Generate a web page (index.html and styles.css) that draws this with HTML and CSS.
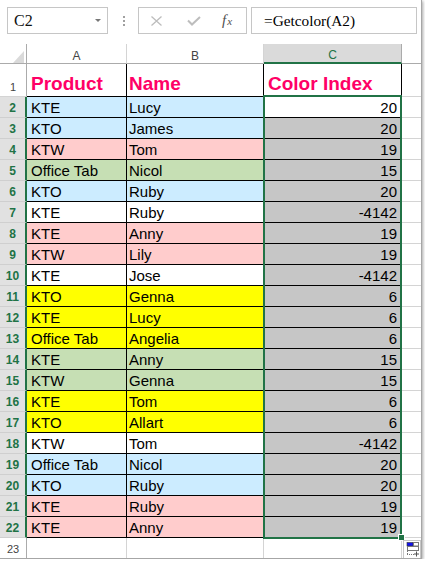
FILE: index.html
```html
<!DOCTYPE html>
<html>
<head>
<meta charset="utf-8">
<link rel="stylesheet" href="styles.css">
</head>
<body>
<div class="app">
  <div class="bar">
    <div class="namebox"><span class="ref">C2</span><span class="caret"></span></div>
    <div class="grip"><i></i><i></i><i></i></div>
    <div class="btns">
      <svg class="x-ic" width="11" height="10" viewBox="0 0 11 10"><path d="M0.5 0.5 L10.5 9.5 M10.5 0.5 L0.5 9.5" stroke="#BDBDBD" stroke-width="1.3" fill="none"/></svg>
      <svg class="ok-ic" width="14" height="10" viewBox="0 0 14 10"><path d="M1 4.5 L5 8.5 L13 1" stroke="#BDBDBD" stroke-width="2" fill="none"/></svg>
      <span class="fx"><i>f</i><span class="fxx">x</span></span>
    </div>
    <div class="formula">=Getcolor(A2)</div>
  </div>
  <div class="sheet">
    <div class="corner"><span class="tri"></span></div>
    <div class="ch">A</div>
    <div class="ch">B</div>
    <div class="ch cs">C</div>
    <div class="ch dh"></div>

    <div class="rh">1</div>
    <div class="c a h">Product</div>
    <div class="c b h">Name</div>
    <div class="c a h">Color Index</div>
    <div class="d"></div>

    <div class="rh s">2</div><div class="c a bl">KTE</div><div class="c b bl">Lucy</div><div class="c n">20</div><div class="d"></div>
    <div class="rh s">3</div><div class="c a bl">KTO</div><div class="c b bl">James</div><div class="c n g">20</div><div class="d"></div>
    <div class="rh s">4</div><div class="c a pk">KTW</div><div class="c b pk">Tom</div><div class="c n g">19</div><div class="d"></div>
    <div class="rh s">5</div><div class="c a gr">Office Tab</div><div class="c b gr">Nicol</div><div class="c n g">15</div><div class="d"></div>
    <div class="rh s">6</div><div class="c a bl">KTO</div><div class="c b bl">Ruby</div><div class="c n g">20</div><div class="d"></div>
    <div class="rh s">7</div><div class="c a">KTE</div><div class="c b">Ruby</div><div class="c n g">-4142</div><div class="d"></div>
    <div class="rh s">8</div><div class="c a pk">KTE</div><div class="c b pk">Anny</div><div class="c n g">19</div><div class="d"></div>
    <div class="rh s">9</div><div class="c a pk">KTW</div><div class="c b pk">Lily</div><div class="c n g">19</div><div class="d"></div>
    <div class="rh s">10</div><div class="c a">KTE</div><div class="c b">Jose</div><div class="c n g">-4142</div><div class="d"></div>
    <div class="rh s">11</div><div class="c a ye">KTO</div><div class="c b ye">Genna</div><div class="c n g">6</div><div class="d"></div>
    <div class="rh s">12</div><div class="c a ye">KTE</div><div class="c b ye">Lucy</div><div class="c n g">6</div><div class="d"></div>
    <div class="rh s">13</div><div class="c a ye">Office Tab</div><div class="c b ye">Angelia</div><div class="c n g">6</div><div class="d"></div>
    <div class="rh s">14</div><div class="c a gr">KTE</div><div class="c b gr">Anny</div><div class="c n g">15</div><div class="d"></div>
    <div class="rh s">15</div><div class="c a gr">KTW</div><div class="c b gr">Genna</div><div class="c n g">15</div><div class="d"></div>
    <div class="rh s">16</div><div class="c a ye">KTE</div><div class="c b ye">Tom</div><div class="c n g">6</div><div class="d"></div>
    <div class="rh s">17</div><div class="c a ye">KTO</div><div class="c b ye">Allart</div><div class="c n g">6</div><div class="d"></div>
    <div class="rh s">18</div><div class="c a">KTW</div><div class="c b">Tom</div><div class="c n g">-4142</div><div class="d"></div>
    <div class="rh s">19</div><div class="c a bl">Office Tab</div><div class="c b bl">Nicol</div><div class="c n g">20</div><div class="d"></div>
    <div class="rh s">20</div><div class="c a bl">KTO</div><div class="c b bl">Ruby</div><div class="c n g">20</div><div class="d"></div>
    <div class="rh s">21</div><div class="c a pk">KTE</div><div class="c b pk">Ruby</div><div class="c n g">19</div><div class="d"></div>
    <div class="rh s">22</div><div class="c a pk">KTE</div><div class="c b pk">Anny</div><div class="c n g">19</div><div class="d"></div>

    <div class="rh last">23</div><div class="e"></div><div class="e"></div><div class="e"></div><div class="d last"></div>
  </div>
  <div class="sel"></div>
  <div class="handle"></div>
  <div class="paste">
    <svg width="16" height="17" viewBox="0 0 16 17">
      <rect x="3" y="1.5" width="6" height="3.5" fill="#1010F0" stroke="#333" stroke-width="0.6"/>
      <rect x="9.5" y="1.5" width="5" height="3.5" fill="none" stroke="#777" stroke-width="1"/>
      <rect x="3.5" y="5.5" width="11" height="4" fill="none" stroke="#777" stroke-width="1"/>
      <path d="M3.5 10 V13.5" stroke="#777" stroke-width="1" stroke-dasharray="1 1"/>
      <path d="M3 13.5 H10" stroke="#777" stroke-width="1" stroke-dasharray="1 1"/>
      <path d="M12.5 10.5 V15.5 M10 13 H15" stroke="#555" stroke-width="1"/>
    </svg>
  </div>
</div>
</body>
</html>
```

FILE: styles.css
```css
html, body {
  margin: 0;
  padding: 0;
  background: #fff;
}

.app {
  position: relative;
  width: 422px;
  height: 559px;
  box-sizing: border-box;
  border-right: 1px solid #A6A6A6;
  border-bottom: 1px solid #A6A6A6;
  box-shadow: 1px 1px 3px rgba(0, 0, 0, 0.35);
  background: #fff;
  overflow: hidden;
}

/* ---------- formula bar ---------- */
.bar {
  height: 44px;
  box-sizing: border-box;
  display: flex;
  align-items: flex-start;
  padding: 7px 0 0 7px;
}

.namebox {
  width: 101px;
  height: 27px;
  box-sizing: border-box;
  border: 1px solid #C6C6C6;
  display: flex;
  align-items: center;
  padding: 1px 0 0 6px;
  font-family: "Liberation Serif", serif;
  font-size: 16px;
  color: #111;
}

.ref {
  flex: 1;
}

.caret {
  width: 0;
  height: 0;
  border-left: 3px solid transparent;
  border-right: 3px solid transparent;
  border-top: 3px solid #777;
  margin-right: 6px;
  margin-top: -1px;
}

.grip {
  margin-left: 14px;
  width: 3px;
  height: 27px;
  display: flex;
  flex-direction: column;
  align-items: center;
  justify-content: center;
  gap: 2px;
}

.grip i {
  display: block;
  width: 2px;
  height: 2px;
  background: #A0A0A0;
}

.btns {
  margin-left: 13px;
  width: 109px;
  height: 27px;
  box-sizing: border-box;
  border: 1px solid #C6C6C6;
  display: flex;
  align-items: center;
}

.x-ic {
  margin-left: 12px;
}

.ok-ic {
  margin-left: 25px;
  margin-top: 1px;
}

.fx {
  margin-left: 21px;
  font-family: "Liberation Serif", serif;
  color: #505050;
  font-size: 15px;
  display: flex;
  align-items: baseline;
}

.fx i {
  font-style: italic;
}

.fxx {
  font-style: italic;
  font-size: 11px;
  margin-left: 1px;
}

.formula {
  margin-left: 4px;
  margin-right: 4px;
  flex: 1;
  height: 27px;
  box-sizing: border-box;
  border: 1px solid #C6C6C6;
  display: flex;
  align-items: center;
  padding: 1px 0 0 12px;
  font-family: "Liberation Serif", serif;
  font-size: 15.3px;
  color: #000;
}

/* ---------- grid ---------- */
.sheet {
  display: grid;
  grid-template-columns: 27px 100px 137px 138px 19px;
  grid-template-rows: 20px 33px repeat(21, 21px) 20px;
}

.sheet > div {
  box-sizing: border-box;
}

.corner {
  border-right: 1px solid #ABABAB;
  border-bottom: 1px solid #ABABAB;
  display: flex;
  justify-content: flex-end;
  align-items: flex-end;
  padding: 0 2px 0 0;
}

.tri {
  width: 0;
  height: 0;
  border-left: 11px solid transparent;
  border-bottom: 12px solid #DADADA;
}

.ch {
  border-right: 1px solid #D4D4D4;
  border-bottom: 1px solid #ABABAB;
  display: flex;
  justify-content: center;
  align-items: flex-end;
  font-family: "Liberation Sans", sans-serif;
  font-size: 12px;
  line-height: 14px;
  color: #444;
}

.ch.cs {
  background: #DADADA;
  color: #217346;
  border-bottom: 2px solid #217346;
  border-right: 1px solid #ABABAB;
}

.ch.dh {
  border-right: none;
}

.rh {
  border-right: 1px solid #ABABAB;
  border-bottom: 1px solid #D4D4D4;
  display: flex;
  justify-content: center;
  align-items: flex-end;
  padding-bottom: 2px;
  font-family: "Liberation Sans", sans-serif;
  font-size: 11px;
  line-height: 13px;
  color: #444;
}

.rh.s {
  background: #E1E1E1;
  border-right: 2px solid #217346;
  border-bottom: 1px solid #CFCFCF;
  color: #217346;
  font-weight: bold;
  font-size: 12px;
  line-height: 14px;
}

.rh.last {
  border-bottom: none;
}

.c {
  border-right: 1px solid #000;
  border-bottom: 1px solid #000;
  display: flex;
  align-items: flex-end;
  padding-bottom: 1px;
  font-family: "Liberation Sans", Arial, sans-serif;
  font-size: 15px;
  line-height: 17px;
  color: #000;
  white-space: nowrap;
  overflow: hidden;
}

.c.a {
  padding-left: 4px;
}

.c.b {
  padding-left: 2px;
}

.c.n {
  justify-content: flex-end;
  padding-right: 4px;
}

.c.h {
  font-weight: bold;
  font-size: 19px;
  line-height: 22px;
  color: #FF0066;
}

.bl { background: #CCECFF; }
.pk { background: #FFCCCC; }
.gr { background: #C6DFB4; }
.ye { background: #FFFF00; }
.g  { background: #C6C6C6; }

.d {
  border-bottom: 1px solid #D4D4D4;
}

.d.last,
.e.last {
  border-bottom: none;
}

.e {
  border-right: 1px solid #D4D4D4;
}

/* ---------- overlays ---------- */
.sel {
  position: absolute;
  left: 263px;
  top: 95px;
  width: 139px;
  height: 444px;
  box-sizing: border-box;
  border: 2px solid #217346;
}

.handle {
  position: absolute;
  left: 398px;
  top: 534px;
  width: 7px;
  height: 7px;
  box-sizing: border-box;
  background: #217346;
  border: 1px solid #fff;
}

.paste {
  position: absolute;
  left: 403px;
  top: 540px;
  width: 18px;
  height: 19px;
  box-sizing: border-box;
  border: 1px solid #C6C6C6;
  background: #fff;
}

.paste svg {
  display: block;
}
```
